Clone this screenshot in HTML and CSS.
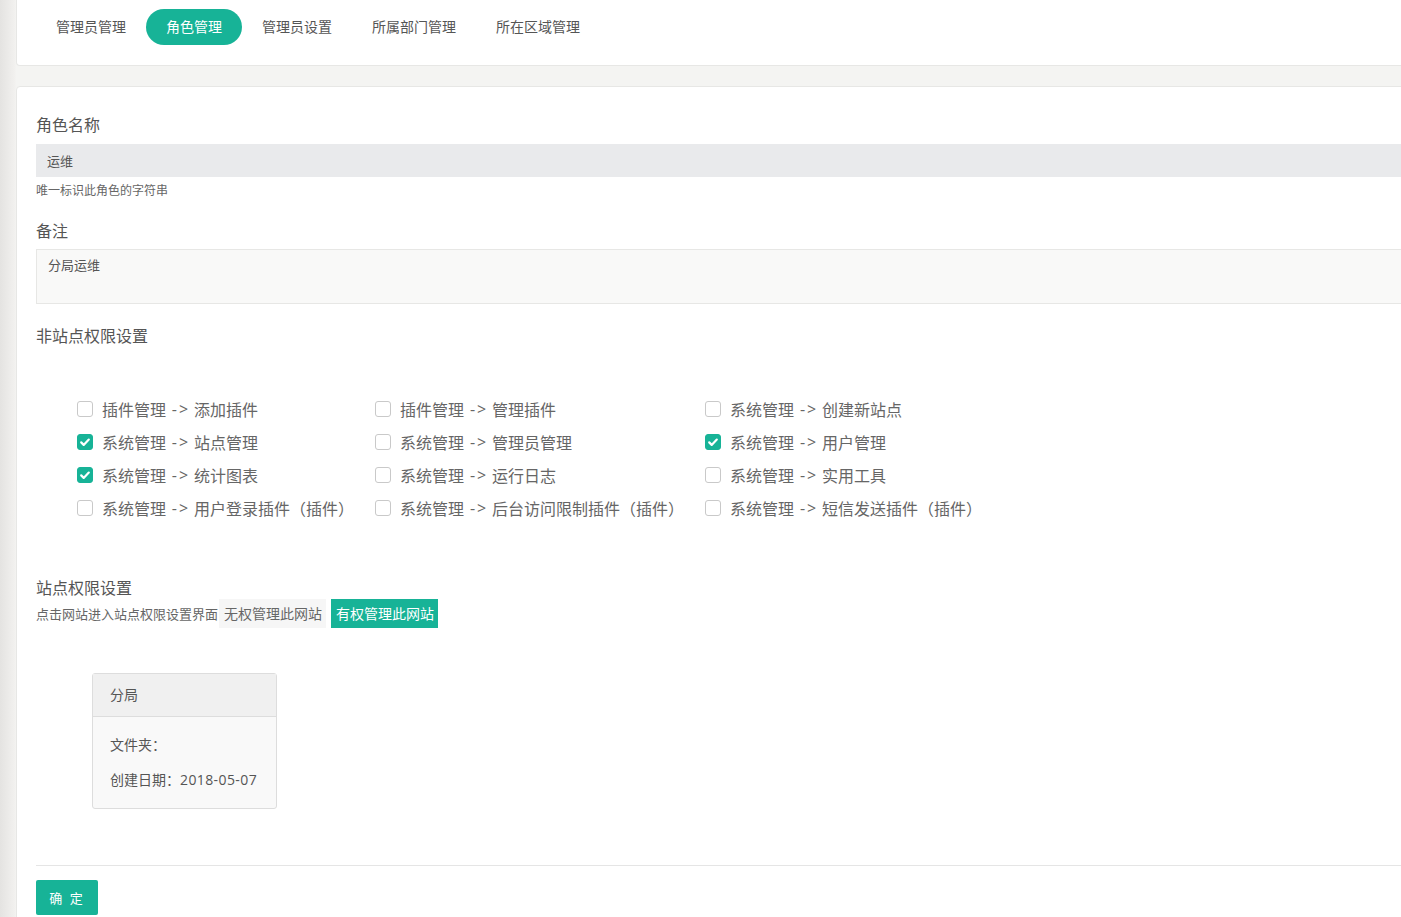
FILE: index.html
```html
<!DOCTYPE html>
<html lang="zh-CN">

<head>
    <meta charset="UTF-8">
    <meta name="viewport" content="width=device-width, initial-scale=1.0">
    <title>角色管理</title>
    <link rel="stylesheet" href="styles.css">
</head>

<body>

    <div class="page">
        <div class="card nav-card">
            <ul class="nav">
                <li><a href="#">管理员管理</a></li>
                <li class="active"><a href="#">角色管理</a></li>
                <li><a href="#">管理员设置</a></li>
                <li><a href="#">所属部门管理</a></li>
                <li><a href="#">所在区域管理</a></li>
            </ul>
        </div>

        <div class="card form-card">
            <div class="field field-name">
                <label class="field-label">角色名称</label>
                <input type="text" class="input" value="运维" disabled>
                <p class="help">唯一标识此角色的字符串</p>
            </div>

            <div class="field field-note">
                <label class="field-label">备注</label>
                <textarea class="textarea">分局运维</textarea>
            </div>

            <div class="field">
                <label class="field-label">非站点权限设置</label>
                <div class="perm-grid">
                    <label class="check"><span class="box"></span>插件管理<span class="arrow">-&gt;</span>添加插件</label>
                    <label class="check"><span class="box"></span>插件管理<span class="arrow">-&gt;</span>管理插件</label>
                    <label class="check"><span class="box"></span>系统管理<span class="arrow">-&gt;</span>创建新站点</label>

                    <label class="check"><span class="box checked"></span>系统管理<span class="arrow">-&gt;</span>站点管理</label>
                    <label class="check"><span class="box"></span>系统管理<span class="arrow">-&gt;</span>管理员管理</label>
                    <label class="check"><span class="box checked"></span>系统管理<span class="arrow">-&gt;</span>用户管理</label>

                    <label class="check"><span class="box checked"></span>系统管理<span class="arrow">-&gt;</span>统计图表</label>
                    <label class="check"><span class="box"></span>系统管理<span class="arrow">-&gt;</span>运行日志</label>
                    <label class="check"><span class="box"></span>系统管理<span class="arrow">-&gt;</span>实用工具</label>

                    <label class="check"><span class="box"></span>系统管理<span class="arrow">-&gt;</span>用户登录插件（插件）</label>
                    <label class="check"><span class="box"></span>系统管理<span class="arrow">-&gt;</span>后台访问限制插件（插件）</label>
                    <label class="check"><span class="box"></span>系统管理<span class="arrow">-&gt;</span>短信发送插件（插件）</label>
                </div>
            </div>

            <div class="field site-field">
                <label class="field-label">站点权限设置</label>
                <div class="legend">
                    <span class="legend-text">点击网站进入站点权限设置界面</span>
                    <span class="tag">无权管理此网站</span>
                    <span class="tag tag-on">有权管理此网站</span>
                </div>
            </div>

            <div class="site-list">
                <div class="site">
                    <div class="site-head">分局</div>
                    <div class="site-body">
                        <p>文件夹：</p>
                        <p>创建日期：<span class="date">2018-05-07</span></p>
                    </div>
                </div>
            </div>

            <div class="actions">
                <button class="btn">确 定</button>
            </div>
        </div>
    </div>

</body>

</html>
```

FILE: styles.css
```css
html,
body {
    overflow: hidden;
}

body {
    margin: 0;
    font-family: "Open Sans", "Noto Sans CJK SC", sans-serif;
    color: #555;
    background: linear-gradient(to right, #e4e3e1 0, #f2f1ef 15px, #f4f4f2 16px);
    height: 917px;
}

.page {
    padding-left: 16px;
    margin-right: -40px;
}

.card {
    background-color: #fff;
    border: 1px solid #e7e7e5;
    border-radius: 4px;
}

.nav-card {
    border-top: none;
    border-top-left-radius: 0;
    height: 65px;
    margin-bottom: 20px;
}

.nav {
    list-style: none;
    margin: 0;
    padding: 9px 0 0 19px;
    display: flex;
}

.nav a {
    display: block;
    height: 36px;
    line-height: 36px;
    padding: 0 20px;
    border-radius: 18px;
    font-size: 14px;
    color: #555;
    text-decoration: none;
}

.nav .active a {
    background-color: #17b397;
    color: #fff;
}

.form-card {
    padding: 26px 0 0 19px;
    height: 900px;
}

.field {
    margin-bottom: 20px;
}

.field-label {
    display: block;
    font-size: 16px;
    line-height: 24px;
    color: #555;
    margin-bottom: 7px;
}

.field-name {
    margin-bottom: 19px;
}

.field-note .field-label {
    margin-bottom: 6px;
}

.input {
    display: block;
    width: 100%;
    height: 33px;
    box-sizing: border-box;
    padding: 0 11px;
    border: none;
    background-color: #e9eaec;
    font-family: inherit;
    font-size: 13px;
    color: #555;
}

.help {
    margin: 5px 0 0;
    font-size: 12px;
    line-height: 18px;
    color: #666;
}

.textarea {
    display: block;
    width: 100%;
    height: 55px;
    box-sizing: border-box;
    padding: 5px 11px;
    border: 1px solid #e7e7e5;
    background-color: #f9f9f8;
    font-family: inherit;
    font-size: 13px;
    color: #555;
    resize: none;
}

.perm-grid {
    display: grid;
    grid-template-columns: auto auto auto;
    justify-content: start;
    column-gap: 21px;
    row-gap: 9px;
    padding: 42px 0 0 41px;
    margin-bottom: 56px;
}

.check {
    display: flex;
    align-items: center;
    height: 24px;
    font-size: 16px;
    color: #666;
    white-space: nowrap;
}

.arrow {
    display: inline-block;
    width: 28px;
    text-align: center;
    letter-spacing: 2px;
    text-indent: 2px;
}

.box {
    flex: none;
    width: 16px;
    height: 16px;
    margin-right: 9px;
    border: 1px solid #c9c9c9;
    border-radius: 3px;
    box-sizing: border-box;
    background: #fff;
}

.box.checked {
    border-color: #17b397;
    background: #17b397 url("data:image/svg+xml,%3Csvg xmlns='http://www.w3.org/2000/svg' viewBox='0 0 16 16'%3E%3Cpath d='M4.2 8.4l2.5 2.5L11.8 5.6' fill='none' stroke='%23fff' stroke-width='2.2' stroke-linecap='round' stroke-linejoin='round'/%3E%3C/svg%3E") center / 16px 16px no-repeat;
}

.site-field .field-label {
    margin-bottom: 0;
}

.legend {
    display: flex;
    align-items: center;
    gap: 5px;
    margin-top: -1px;
    font-size: 13px;
    color: #666;
}

.legend-text {
    margin-right: -4px;
}

.tag {
    display: inline-block;
    height: 29px;
    line-height: 29px;
    padding: 0 4px 0 5px;
    background-color: #f6f6f6;
    font-size: 14px;
    color: #666;
}

.tag-on {
    background-color: #17b397;
    color: #fff;
}

.site-list {
    padding: 25px 0 0 56px;
    height: 192px;
}

.site {
    width: 185px;
    border: 1px solid #ddd;
    border-radius: 3px;
    background-color: #f9f9f9;
    box-sizing: border-box;
}

.site-head {
    height: 42px;
    line-height: 42px;
    padding: 0 17px;
    background-color: #f0f0f0;
    border-bottom: 1px solid #ddd;
    font-size: 14px;
    color: #555;
}

.site-body {
    padding: 18px 17px 10px;
    font-size: 14px;
    color: #555;
}

.site-body p {
    margin: 0 0 15px;
    line-height: 20px;
}

.site-body p:last-child {
    margin-bottom: 8px;
}

.date {
    letter-spacing: 0.4px;
}

.actions {
    border-top: 1px solid #e5e5e5;
    padding-top: 14px;
}

.btn {
    width: 62px;
    height: 35px;
    background-color: #17b397;
    color: white;
    border: none;
    border-radius: 2px;
    font-family: inherit;
    font-size: 13px;
    letter-spacing: 2px;
    cursor: pointer;
}
```
